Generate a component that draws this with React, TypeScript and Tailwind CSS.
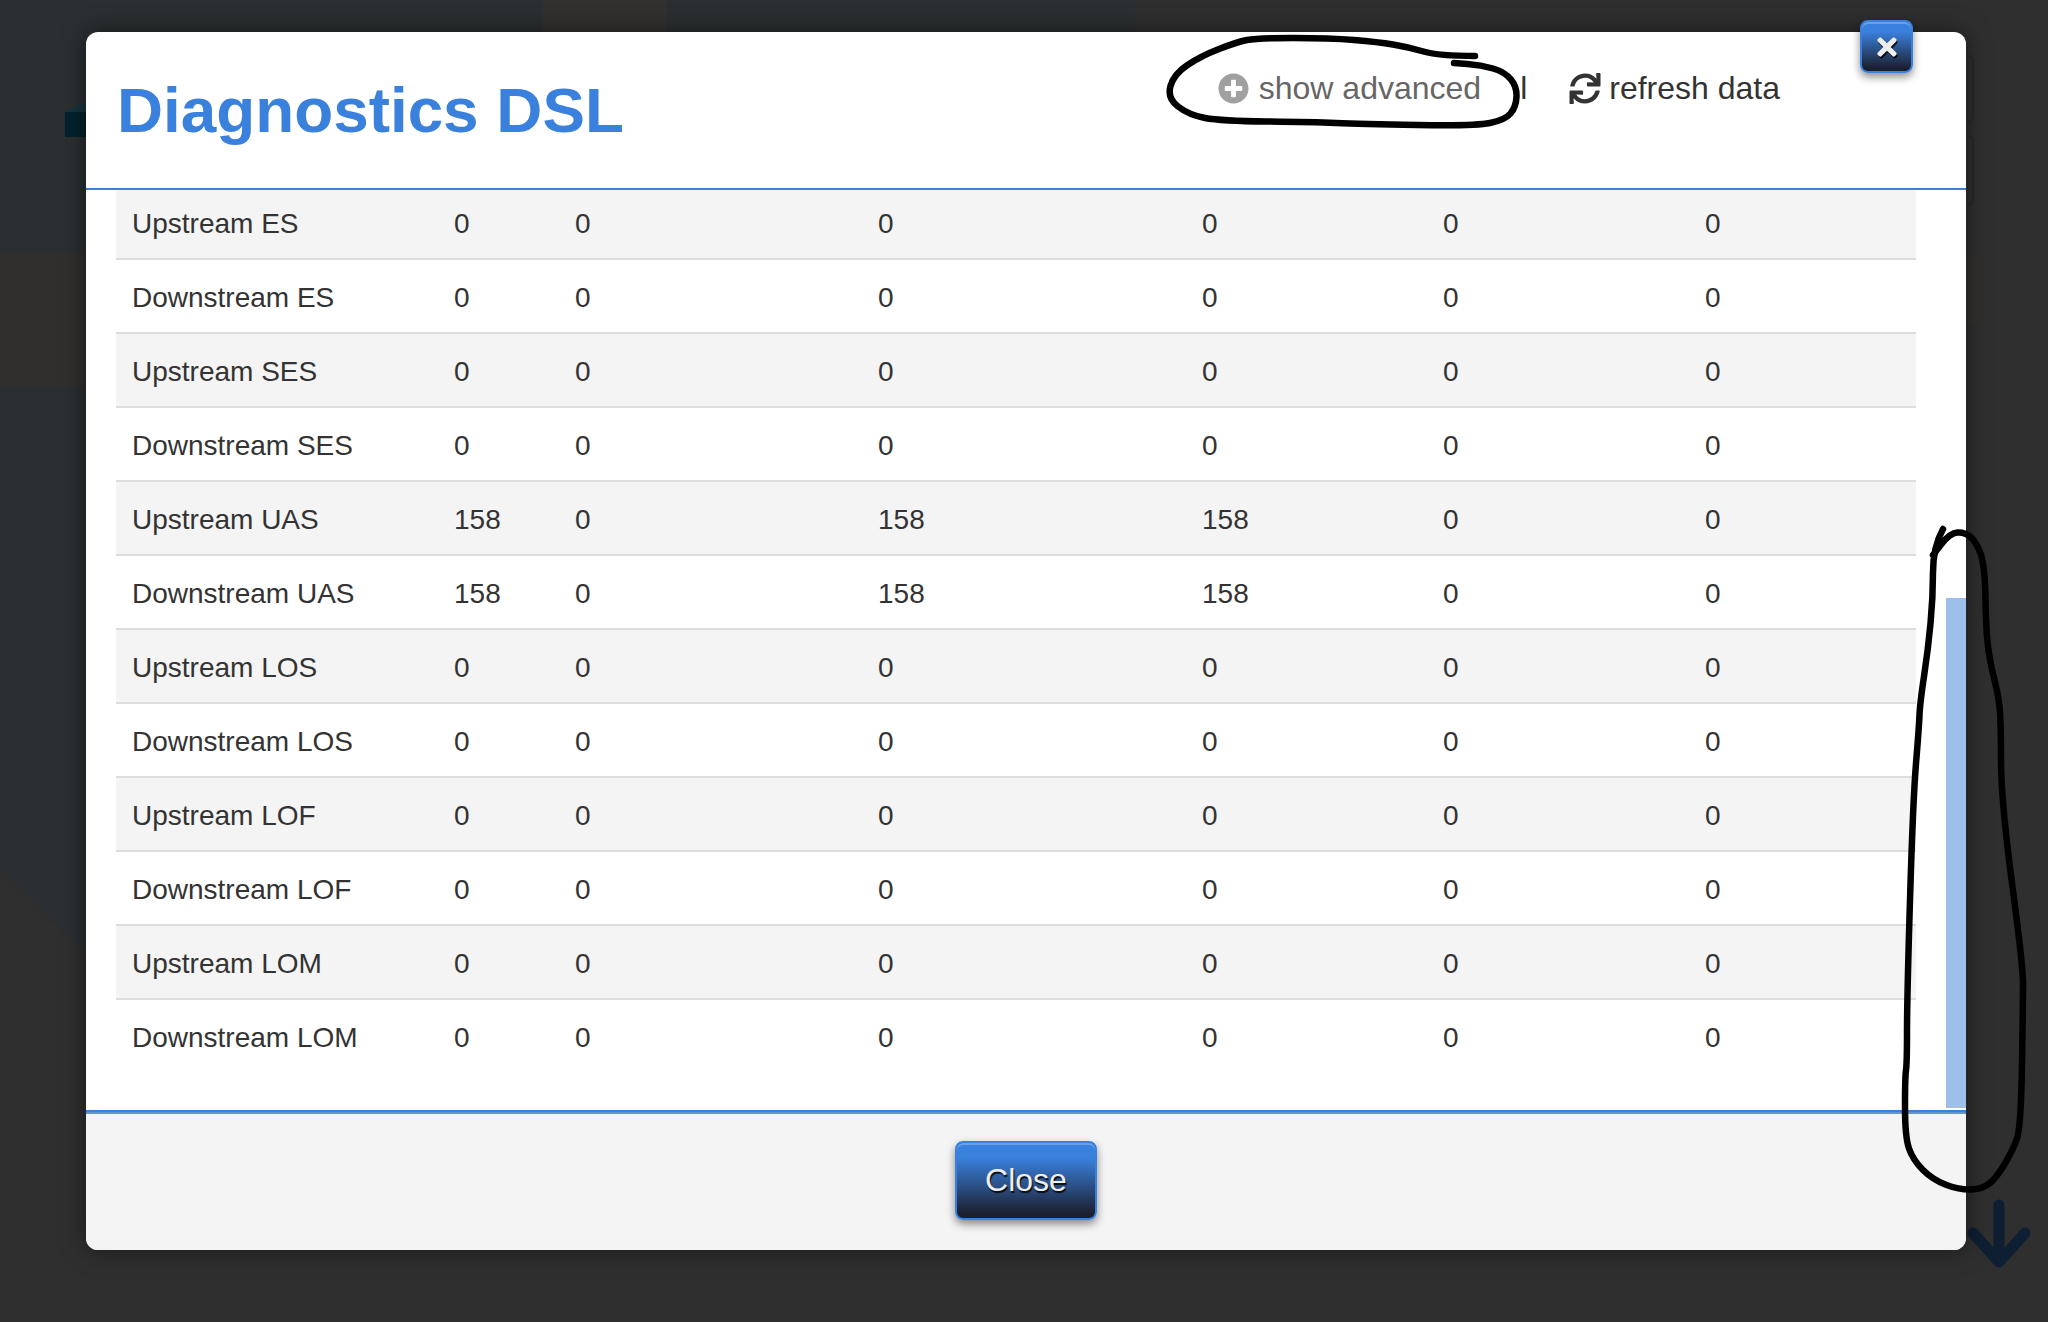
import { FaPlusCircle, FaSync, FaTimes } from 'react-icons/fa'

const ROWS = [
  ['Upstream ES', '0', '0', '0', '0', '0', '0'],
  ['Downstream ES', '0', '0', '0', '0', '0', '0'],
  ['Upstream SES', '0', '0', '0', '0', '0', '0'],
  ['Downstream SES', '0', '0', '0', '0', '0', '0'],
  ['Upstream UAS', '158', '0', '158', '158', '0', '0'],
  ['Downstream UAS', '158', '0', '158', '158', '0', '0'],
  ['Upstream LOS', '0', '0', '0', '0', '0', '0'],
  ['Downstream LOS', '0', '0', '0', '0', '0', '0'],
  ['Upstream LOF', '0', '0', '0', '0', '0', '0'],
  ['Downstream LOF', '0', '0', '0', '0', '0', '0'],
  ['Upstream LOM', '0', '0', '0', '0', '0', '0'],
  ['Downstream LOM', '0', '0', '0', '0', '0', '0'],
]

const BUTTON = 'border-2 border-[#3a80dd] bg-[linear-gradient(#3a80dd_20%,#1b1f2d_95%)] shadow-[inset_0_2px_0_rgba(255,255,255,0.25),0_4px_8px_rgba(0,0,0,0.45)]'

// hand drawn marks on top of the screenshot
const CIRCLE: [number, number][] = [
  [1475, 56], [1439, 56], [1408, 47], [1378, 42], [1330, 38], [1257, 38], [1237, 42], [1201, 56],
  [1174, 74], [1167, 98], [1189, 115], [1221, 121], [1312, 122], [1360, 124], [1475, 126], [1505, 120],
  [1516, 107], [1517, 87], [1505, 72], [1481, 65], [1454, 63],
]
const LOOP: [number, number][] = [
  [1943, 529], [1933, 547], [1933, 597], [1928, 650], [1920, 703], [1919, 727], [1913, 800], [1907, 1000],
  [1907, 1063], [1905, 1077], [1905, 1137], [1913, 1160], [1933, 1180], [1960, 1190], [1983, 1189], [1997, 1177],
  [2013, 1150], [2021, 1127], [2023, 1000], [2023, 966], [2001, 800], [2001, 720], [1998, 693], [1991, 667],
  [1986, 633], [1985, 567], [1977, 543], [1965, 532], [1950, 533], [1933, 555],
]

function smooth(pts: [number, number][]) {
  let d = `M${pts[0][0]} ${pts[0][1]}`
  for (let i = 1; i < pts.length - 1; i++) {
    const mx = (pts[i][0] + pts[i + 1][0]) / 2
    const my = (pts[i][1] + pts[i + 1][1]) / 2
    d += ` Q${pts[i][0]} ${pts[i][1]} ${mx} ${my}`
  }
  const last = pts[pts.length - 1]
  return d + ` L${last[0]} ${last[1]}`
}

export default function App() {
  return (
    <div className="relative w-[2048px] h-[1322px] overflow-hidden bg-[#2f2f2f] pt-[32px] pl-[86px] font-['Liberation_Sans',Arial,sans-serif]">
      {/* dimmed page behind the modal */}
      <div className="absolute left-0 top-0 w-[1134px] h-[955px] bg-[#2b2f31] [clip-path:polygon(0_0,100%_0,100%_100%,86px_100%,0_872px)]" />
      <div className="absolute left-[543px] top-0 w-[124px] h-[32px] bg-[#32312f]" />
      <div className="absolute left-0 top-[253px] w-[86px] h-[134px] bg-[#312f2e]" />
      <div className="absolute left-[65px] top-[101px] w-[21px] h-[11px] bg-[#16343c] [clip-path:polygon(0_100%,100%_0,100%_100%)]" />
      <div className="absolute left-[65px] top-[112px] w-[21px] h-[25px] bg-[#03222e]" />
      <div className="absolute left-[1960px] top-[55px] w-[14px] h-[68px] rounded-md border-2 border-[#292929]" />
      <div className="absolute left-[1960px] top-[135px] w-[14px] h-[71px] rounded-md border-2 border-[#292929]" />
      <div className="absolute left-[1960px] top-[255px] w-[20px] h-[70px] bg-[#32312e]" />
      <svg className="absolute left-[1960px] top-[1195px]" width="80" height="80" viewBox="0 0 80 80" fill="none" stroke="#0e1f33" strokeWidth="11" strokeLinecap="round" strokeLinejoin="round">
        <path d="M39 10v57M13 38l26 29 26-29" />
      </svg>

      <div className="relative flex flex-col w-[1880px] h-[1218px] rounded-xl bg-white shadow-[0_0_24px_rgba(0,0,0,0.5)]">
        <div className="flex justify-between items-start h-[158px] shrink-0 border-b-2 border-[#3a80dd] pl-[31px] pr-[186px]">
          <h1 className="mt-[42px] text-[63.8px] leading-[72px] font-bold text-[#3a80dd]">Diagnostics DSL</h1>
          <div className="flex items-center mt-[36px] text-[32px] leading-[40px]">
            <FaPlusCircle className="text-[#a0a0a0] w-[31px] h-[31px]" />
            <span className="ml-[10px] text-[#666]">show advanced</span>
            <span className="ml-[39px] text-[#333]">l</span>
            <FaSync className="ml-[42px] text-[#333] w-[32px] h-[31px]" />
            <span className="ml-[8px] text-[#333]">refresh data</span>
          </div>
        </div>

        <div className="relative flex-1 overflow-hidden">
          <table className="table-fixed border-separate border-spacing-0 w-[1800px] ml-[30px] -mt-[6px] text-[28px] text-[#333]">
            <colgroup>
              <col className="w-[338px]" />
              <col className="w-[121px]" />
              <col className="w-[303px]" />
              <col className="w-[324px]" />
              <col className="w-[241px]" />
              <col className="w-[262px]" />
              <col className="w-[211px]" />
            </colgroup>
            <tbody>
              {ROWS.map((row, i) => (
                <tr key={row[0]} className={i % 2 === 0 ? 'bg-[#f4f4f4]' : 'bg-white'}>
                  {row.map((cell, j) => (
                    <td key={j} className={`h-[74px] p-0 pt-[4px] border-t-2 border-[#ddd] ${j === 0 ? 'pl-[16px]' : ''}`}>
                      {cell}
                    </td>
                  ))}
                </tr>
              ))}
            </tbody>
          </table>
          <div className="absolute right-0 top-[408px] bottom-[2px] w-[20px] bg-[#9cbfec]" />
        </div>

        <div className="flex items-center justify-center h-[140px] shrink-0 rounded-b-xl bg-[#f4f4f4] border-t-2 border-[#3a80dd] pb-[2px] shadow-[inset_0_2px_0_#6595c8]">
          <button className={`w-[142px] h-[79px] rounded-lg text-[32px] text-[#eee] [text-shadow:1px_2px_1px_rgba(0,0,0,0.85)] ${BUTTON}`}>
            Close
          </button>
        </div>

        <button className={`absolute left-[1774px] -top-[12px] flex items-center justify-center w-[53px] h-[53px] rounded-lg ${BUTTON}`}>
          <FaTimes className="w-[28px] h-[28px] text-[#eee] drop-shadow-[1px_2px_0_rgba(0,0,0,0.8)]" />
        </button>
      </div>

      <svg className="absolute left-0 top-0 pointer-events-none" width="2048" height="1322" fill="none" stroke="#000" strokeWidth="6.5" strokeLinecap="round" strokeLinejoin="round">
        <path d={smooth(CIRCLE)} />
        <path d={smooth(LOOP)} />
      </svg>
    </div>
  )
}
